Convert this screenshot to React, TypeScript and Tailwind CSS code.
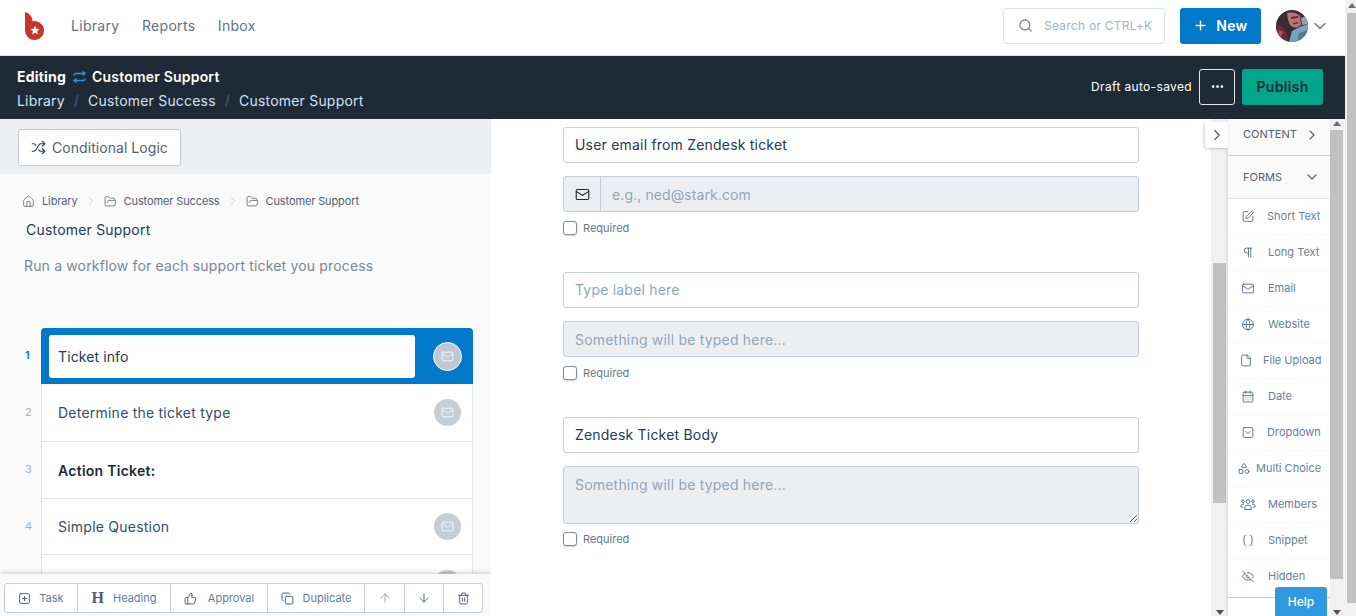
import {
  ArrowDown,
  ArrowUp,
  Braces,
  CalendarDays,
  ChevronDown,
  ChevronRight,
  Copy,
  Ellipsis,
  EyeOff,
  File,
  FolderOpen,
  Globe,
  House,
  Mail,
  Pilcrow,
  Plus,
  Search,
  Shapes,
  Shuffle,
  SquareChevronDown,
  SquarePen,
  SquarePlus,
  ThumbsUp,
  Trash2,
} from "lucide-react";

const font = "font-['Inter','Liberation_Sans',sans-serif]";

const MembersIcon = ({ className }: { size?: number; strokeWidth?: number; className?: string }) => (
  <svg viewBox="0 0 16 13" fill="none" stroke="currentColor" strokeWidth="0.9" className={className} height="13">
    <circle cx="8" cy="3.500" r="1.800" />
    <circle cx="3" cy="3.200" r="1.300" />
    <circle cx="13" cy="3.200" r="1.300" />
    <path d="M4.800 11.500 V9.500 Q4.800 7 8 7 Q11.200 7 11.200 9.500 V11.500 Z" />
    <path d="M3.200 9 H1 V7.800 Q1 6 3 6 H4 M12.800 9 H15 V7.800 Q15 6 13 6 H12" />
  </svg>
);

const panelItems = [
  { label: "Short Text", icon: SquarePen, row: "pl-3 gap-[11px]" },
  { label: "Long Text", icon: Pilcrow, row: "pl-3 gap-3" },
  { label: "Email", icon: Mail, row: "pl-3 gap-3" },
  { label: "Website", icon: Globe, row: "pl-3 gap-3" },
  { label: "File Upload", icon: File, row: "pl-[10px] gap-[9px]" },
  { label: "Date", icon: CalendarDays, row: "pl-3 gap-3" },
  { label: "Dropdown", icon: SquareChevronDown, row: "pl-3 gap-[11px]" },
  { label: "Multi Choice", icon: Shapes, row: "pl-2 gap-1" },
  { label: "Members", icon: MembersIcon, row: "pl-3 gap-3" },
  { label: "Snippet", icon: Braces, row: "pl-3 gap-3" },
  { label: "Hidden", icon: EyeOff, row: "pl-3 gap-3" },
];

const toolbarItems = [
  { label: "Task", icon: SquarePlus, cell: "w-[73px] gap-2" },
  { label: "Heading", cell: "w-[93px] gap-[9px]" },
  { label: "Approval", icon: ThumbsUp, cell: "w-[97px] gap-[11px]" },
  { label: "Duplicate", icon: Copy, cell: "w-[97px] gap-[9px]" },
];

const steps = [
  { n: 2, label: "Determine the ticket type", badge: true, row: "h-[58px]" },
  { n: 3, label: "Action Ticket:", badge: false, row: "h-[57px]" },
  { n: 4, label: "Simple Question", badge: true, row: "h-[56px]" },
  { n: 5, label: "", badge: true, row: "h-[57px]" },
];

const ArrowUpSmall = () => (
  <span className="flex size-0 border-x-[4px] border-b-[5px] border-x-transparent border-b-[#6b6b6b]" />
);

const ArrowDownSmall = () => (
  <span className="flex size-0 border-x-[4px] border-t-[5px] border-x-transparent border-t-[#4f4f4f]" />
);

const Logo = () => (
  <svg width="20" height="28" viewBox="0 0 20 28">
    <path d="M0 0 Q7 2 7.500 9 L7.500 9.200 A9.500 9.500 0 1 1 0 18.500 Z" fill="#c7352b" />
    <path
      d="M10 13.800 L11.300 16.800 L14.600 17.100 L12.100 19.200 L12.900 22.400 L10 20.700 L7.100 22.400 L7.900 19.200 L5.400 17.100 L8.700 16.800 Z"
      fill="#fff"
    />
  </svg>
);

const Avatar = () => (
  <svg width="32" height="32" viewBox="0 0 32 32" className="rounded-full">
    <rect width="32" height="32" fill="#3d2a33" />
    <path d="M0 14 Q8 16 11 24 L12 32 H0 Z" fill="#6b2a35" />
    <path d="M3 20 L7 22 L5 27 L2 25 Z" fill="#a8574f" />
    <path d="M11 3 Q19 1 24 6 L25 15 Q19 20 14 15 Q11 9 11 3 Z" fill="#b5757c" />
    <path d="M15 7 L22 6 L22 8 L15 9 Z M17 13 L22 12 L22 13.500 L17 14.500 Z" fill="#6d2a30" />
    <path d="M13 32 L16 21 Q24 16 32 14 V32 Z" fill="#7ba3c0" />
    <path d="M23 23 L32 20 V32 H21 Z" fill="#4f7d9c" />
    <path d="M25 8 L32 5 V14 L26 15 Z" fill="#94a3a8" />
  </svg>
);

const WorkflowIcon = () => (
  <svg width="13" height="12" viewBox="0 0 13 12" fill="none" stroke="#3a8ee0" strokeWidth="1.300" className="ml-[7px] mr-[6px]">
    <path d="M1 4.500 Q1 2.500 3 2.500 H12 M9.500 0.500 L12 2.500 L9.500 4.500" />
    <path d="M12 7.500 Q12 9.500 10 9.500 H1 M3.500 7.500 L1 9.500 L3.500 11.500" />
  </svg>
);

const Required = ({ className }: { className: string }) => (
  <div className={`flex h-[14px] items-center gap-[6px] ${className}`}>
    <span className="size-[14px] rounded-[3px] border border-[#7f8c99] bg-white shadow-[0_1px_2px_rgba(0,0,0,0.2)]" />
    <span className="text-[11px] leading-[14px] text-[#66788a]">Required</span>
  </div>
);

const inputClass =
  "h-9 w-full rounded-[3px] border border-[#c3d0dc] px-[11px] text-sm tracking-[0.2px] text-[#243b53] outline-none placeholder:text-[#8ea6bd]";

const App = () => {
  return (
    <div className={`flex h-[616px] w-[1356px] overflow-hidden bg-white ${font}`}>
      <div className="flex w-[1345px] shrink-0 flex-col">
        <header className="flex h-[56px] shrink-0 items-center border-b border-[#dfe3e8] bg-white pb-[4px] pl-[25px] pr-[15px]">
          <Logo />
          <nav className="ml-[26px] flex gap-[22.5px] text-sm tracking-[0.3px] text-[#627283]">
            <span>Library</span>
            <span>Reports</span>
            <span>Inbox</span>
          </nav>
          <div className="ml-auto flex h-9 w-[162px] items-center rounded-[3px] border border-[#dde4ea] pl-[14px]">
            <Search size={15} strokeWidth={1.7} className="text-[#627283]" />
            <span className="ml-[11px] text-xs tracking-[0.25px] text-[#9fb3c8]">Search or CTRL+K</span>
          </div>
          <button className="ml-[15px] flex h-9 w-[81px] items-center justify-center gap-[8px] rounded-[3px] bg-[#0079ca] text-sm font-semibold tracking-[0.3px] text-white">
            <Plus size={15} strokeWidth={2.2} />
            New
          </button>
          <div className="ml-[15px] flex size-8 items-center justify-center">
            <Avatar />
          </div>
          <ChevronDown size={20} strokeWidth={1.5} className="ml-[2px] text-[#627283]" />
        </header>

        <div className="flex h-[63px] shrink-0 items-center justify-between bg-[#1e2a35] pl-[17px] pr-[22px]">
          <div className="pt-[3px]">
            <div className="flex items-center text-sm font-semibold tracking-[0.2px] text-white">
              <span className="font-bold">Editing</span>
              <WorkflowIcon />
              Customer Support
            </div>
            <div className="mt-1 flex gap-[9px] text-sm tracking-[0.2px] text-[#cfe3f5]">
              <span>Library</span>
              <span className="text-[#486581]">/</span>
              <span>Customer Success</span>
              <span className="text-[#486581]">/</span>
              <span>Customer Support</span>
            </div>
          </div>
          <div className="flex items-center pb-[2px]">
            <span className="text-xs tracking-[0.35px] text-white">Draft auto-saved</span>
            <button className="ml-[7px] flex size-9 items-center justify-center rounded-[3px] border border-[#e4e7eb] text-white">
              <Ellipsis size={15} strokeWidth={2.4} />
            </button>
            <button className="ml-[7px] h-9 w-[81px] rounded-[3px] bg-[#00a58a] text-sm font-semibold tracking-[0.3px] text-[#1e2a35]">
              Publish
            </button>
          </div>
        </div>

        <div className="flex min-h-0 flex-1">
          <aside className="relative w-[491px] shrink-0 overflow-hidden bg-[#fafafa]">
            <div className="h-[55px] bg-[#eceef2] pl-[18px] pt-[10px]">
              <button className="flex h-[37px] w-[163px] items-center justify-center gap-[6px] rounded-[3px] border border-[#c3ccd6] bg-white text-sm tracking-[0.05px] text-[#52606d]">
                <Shuffle size={15} strokeWidth={1.8} className="text-[#323f4b]" />
                Conditional Logic
              </button>
            </div>
            <div className="mt-[19px] flex items-center pl-[22px] text-[11px] tracking-[-0.12px] text-[#52606d]">
              <House size={13} strokeWidth={1.4} />
              <span className="ml-[7px]">Library</span>
              <ChevronRight size={14} strokeWidth={1.4} className="mx-[6px] text-[#bcccdc]" />
              <FolderOpen size={13} strokeWidth={1.4} />
              <span className="ml-[7px]">Customer Success</span>
              <ChevronRight size={14} strokeWidth={1.4} className="mx-[6px] text-[#bcccdc]" />
              <FolderOpen size={13} strokeWidth={1.4} />
              <span className="ml-[7px]">Customer Support</span>
            </div>
            <div className="mt-[10px] pl-[26px] text-sm tracking-[0.2px] text-[#243b53]">Customer Support</div>
            <div className="mt-[16px] pl-[24px] text-sm tracking-[0.16px] text-[#7b8794]">
              Run a workflow for each support ticket you process
            </div>

            <div className="mt-[52px] flex flex-col pl-[25px]">
              <div className="flex h-[56px] items-center">
                <span className="w-4 pb-[1px] text-[11px] font-semibold text-[#0079ca]">1</span>
                <div className="flex h-[56px] w-[432px] items-center rounded-t-[4px] bg-[#0079ca] pl-2 pt-[2px]">
                  <div className="flex h-[43px] w-[366px] items-center rounded-[3px] bg-white pl-[9px] text-sm tracking-[0.1px] text-[#243b53]">
                    Ticket info
                  </div>
                  <span className="ml-[18px] flex size-[29px] items-center justify-center rounded-full border border-white bg-[#bcc8d4] text-white">
                    <Mail size={13} strokeWidth={1.6} />
                  </span>
                </div>
              </div>
              {steps.map((step) => (
                <div key={step.n} className={`flex items-center ${step.row}`}>
                  <span className="w-4 pb-[1px] text-[11px] text-[#9fb3c8]">{step.n === 5 ? "" : step.n}</span>
                  <div className="flex h-full w-[432px] items-center border-x border-b border-[#dde4ea] bg-white pl-[16px] pr-[11px] pt-[1px]">
                    <span
                      className={
                        step.badge
                          ? "mt-[1px] text-sm tracking-[0.23px] text-[#334e68]"
                          : "mt-[1px] text-sm font-semibold tracking-[0.27px] text-[#1f2933]"
                      }
                    >
                      {step.label}
                    </span>
                    {step.badge && (
                      <span className="ml-auto flex size-[27px] items-center justify-center rounded-full bg-[#c3ced9] text-white">
                        <Mail size={13} strokeWidth={1.6} />
                      </span>
                    )}
                  </div>
                </div>
              ))}
            </div>

            <div className="absolute inset-x-0 bottom-0 h-[42px] bg-[#fafafa] pl-1 pt-[9px] shadow-[0_-2px_4px_rgba(0,0,0,0.15)]">
              <div className="flex h-[30px] w-[479px] items-center rounded-[3px] border border-[#c3ccd6] bg-white text-[11px] text-[#627d98]">
                {toolbarItems.map((item) => (
                  <div key={item.label} className={`flex h-full items-center justify-center border-r border-[#c3ccd6] ${item.cell}`}>
                    {item.icon ? (
                      <item.icon size={13} strokeWidth={1.6} className="text-[#334e68]" />
                    ) : (
                      <span className="font-['Liberation_Serif',serif] text-base font-bold leading-none text-[#52606d]">H</span>
                    )}
                    {item.label}
                  </div>
                ))}
                <div className="flex h-full w-10 items-center justify-center border-r border-[#c3ccd6]">
                  <ArrowUp size={14} strokeWidth={1.4} className="text-[#829ab1]" />
                </div>
                <div className="flex h-full w-[39px] items-center justify-center border-r border-[#c3ccd6]">
                  <ArrowDown size={14} strokeWidth={1.4} className="text-[#334e68]" />
                </div>
                <div className="flex h-full flex-1 items-center justify-center">
                  <Trash2 size={13} strokeWidth={1.6} className="text-[#334e68]" />
                </div>
              </div>
            </div>
          </aside>

          <main className="flex w-[720px] shrink-0 flex-col bg-white pl-[72px] pr-[72px] pt-2">
            <input readOnly className={`${inputClass} bg-white pb-[1px]`} value="User email from Zendesk ticket" />
            <div className="mt-[13px] flex h-9 rounded-[3px] border border-[#c3d0dc] bg-[#eceef2]">
              <span className="flex w-[37px] items-center justify-center border-r border-[#c3d0dc] text-[#1f2933]">
                <Mail size={15} strokeWidth={1.8} />
              </span>
              <input
                readOnly
                placeholder="e.g., ned@stark.com"
                className="min-w-0 flex-1 bg-transparent px-[11px] pt-[1px] text-sm tracking-[0.1px] outline-none placeholder:text-[#8ea6bd]"
              />
            </div>
            <Required className="mt-[9px]" />

            <input readOnly placeholder="Type label here" className={`${inputClass} mt-[37px] bg-white pb-[1px]`} />
            <input
              readOnly
              placeholder="Something will be typed here..."
              className={`${inputClass} mt-[13px] bg-[#eceef2] pt-[1px]`}
            />
            <Required className="mt-[9px]" />

            <input readOnly className={`${inputClass} mt-[37px] bg-white pb-[1px]`} value="Zendesk Ticket Body" />
            <textarea
              readOnly
              placeholder="Something will be typed here..."
              className="mt-[13px] block h-[58px] w-full rounded-[3px] border border-[#c3d0dc] bg-[#eceef2] px-[11px] py-2 text-sm tracking-[0.2px] outline-none placeholder:text-[#8ea6bd]"
            />
            <Required className="mt-2" />
          </main>

          <div className="flex w-[17px] shrink-0 flex-col items-center bg-[#f1f1f1]">
            <div className="mt-[144px] h-[240px] w-[13px] bg-[#c1c1c1]" />
            <div className="mt-auto pb-[1px]">
              <ArrowDownSmall />
            </div>
          </div>

          <div className="relative flex w-[102px] shrink-0 flex-col bg-white shadow-[-1px_0_2px_rgba(0,0,0,0.12)]">
            <div className="absolute -left-[23px] top-[3px] flex h-[26px] w-[23px] items-center justify-center rounded-l-[3px] bg-white shadow-[-1px_1px_3px_rgba(0,0,0,0.2)]">
              <ChevronRight size={18} strokeWidth={1.6} className="text-[#52606d]" />
            </div>
            <div className="flex h-[37px] shrink-0 items-center justify-between border-b border-[#c3d0dc] bg-[#fafafa] pb-[5px] pl-[15px] pr-[10px] text-[11px] text-[#52606d]">
              CONTENT
              <ChevronRight size={16} strokeWidth={1.6} />
            </div>
            <div className="flex h-[43px] shrink-0 items-center justify-between border-b border-[#dde4ea] bg-[#fafafa] pl-[15px] pr-[10px] text-[11px] text-[#52606d]">
              FORMS
              <ChevronDown size={16} strokeWidth={1.6} />
            </div>
            {panelItems.map((item) => (
              <div
                key={item.label}
                className={`flex h-9 shrink-0 items-center border-b border-[#f7f7f8] text-[11px] text-[#677f96] ${item.row}`}
              >
                <item.icon size={13} strokeWidth={1.6} className="w-4 shrink-0 text-[#486581]" />
                <span className="whitespace-nowrap">{item.label}</span>
              </div>
            ))}
            <div className="mt-[2px] border-t border-[#c3d0dc]" />
            <div className="absolute bottom-0 left-[47px] flex h-[29px] w-[52px] items-center justify-center rounded-t-[3px] bg-[#2f9ae0] text-xs font-medium text-white">
              Help
            </div>
          </div>

          <div className="flex w-[15px] shrink-0 flex-col items-center bg-[#f1f1f1] pr-[2px]">
            <div className="pt-[2px]">
              <ArrowUpSmall />
            </div>
            <div className="mt-[4px] h-[449px] w-[13px] bg-[#c1c1c1]" />
            <div className="mt-auto pb-[1px]">
              <ArrowDownSmall />
            </div>
          </div>
        </div>
      </div>

      <div className="flex w-[11px] shrink-0 flex-col items-center bg-[#f1f1f1] pl-[2px]">
        <div className="pt-[3px]">
          <ArrowUpSmall />
        </div>
        <div className="mt-[5px] h-[590px] w-[9px] bg-[#c1c1c1]" />
      </div>
    </div>
  );
};

export default App;
